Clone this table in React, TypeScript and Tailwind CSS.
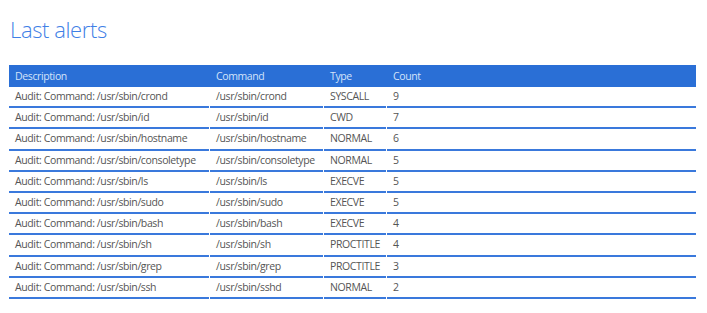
const alerts = [
  { description: 'Audit: Command: /usr/sbin/crond', command: '/usr/sbin/crond', type: 'SYSCALL', count: 9 },
  { description: 'Audit: Command: /usr/sbin/id', command: '/usr/sbin/id', type: 'CWD', count: 7 },
  { description: 'Audit: Command: /usr/sbin/hostname', command: '/usr/sbin/hostname', type: 'NORMAL', count: 6 },
  { description: 'Audit: Command: /usr/sbin/consoletype', command: '/usr/sbin/consoletype', type: 'NORMAL', count: 5 },
  { description: 'Audit: Command: /usr/sbin/ls', command: '/usr/sbin/ls', type: 'EXECVE', count: 5 },
  { description: 'Audit: Command: /usr/sbin/sudo', command: '/usr/sbin/sudo', type: 'EXECVE', count: 5 },
  { description: 'Audit: Command: /usr/sbin/bash', command: '/usr/sbin/bash', type: 'EXECVE', count: 4 },
  { description: 'Audit: Command: /usr/sbin/sh', command: '/usr/sbin/sh', type: 'PROCTITLE', count: 4 },
  { description: 'Audit: Command: /usr/sbin/grep', command: '/usr/sbin/grep', type: 'PROCTITLE', count: 3 },
  { description: 'Audit: Command: /usr/sbin/ssh', command: '/usr/sbin/sshd', type: 'NORMAL', count: 2 },
];

const cols = 'grid grid-cols-[200px_113px_62px_1fr] gap-x-px';

export default function App() {
  return (
    <div
      className="min-h-[313px] w-[707px] bg-white pl-[9px] pr-[11px] pt-[14px]"
      style={{ fontFamily: '"Open Sans", "Liberation Sans", sans-serif' }}
    >
      <h2 className="pl-px text-[22px] font-light leading-[30px] tracking-[-0.4px] text-[#3f80e6]">
        Last alerts
      </h2>

      <div className="mt-[21px] text-[10.5px] tracking-[-0.38px]">
        {/* Header */}
        <div className={`${cols} h-[22px] bg-[#2a6fd6] leading-[22px] text-[#d4e3fa]`}>
          <div className="pl-[6px]">Description</div>
          <div className="pl-[6px]">Command</div>
          <div className="pl-[6px]">Type</div>
          <div className="pl-[6px]">Count</div>
        </div>

        {/* Rows */}
        {alerts.map((alert, index) => (
          <div key={index} className={`${cols} leading-[19.2px] text-[#555]`}>
            <div className="border-b-2 border-[#3a79dc] pl-[6px]">{alert.description}</div>
            <div className="border-b-2 border-[#3a79dc] pl-[6px]">{alert.command}</div>
            <div className="border-b-2 border-[#3a79dc] pl-[6px]">{alert.type}</div>
            <div className="border-b-2 border-[#3a79dc] pl-[6px]">{alert.count}</div>
          </div>
        ))}
      </div>
    </div>
  );
}
